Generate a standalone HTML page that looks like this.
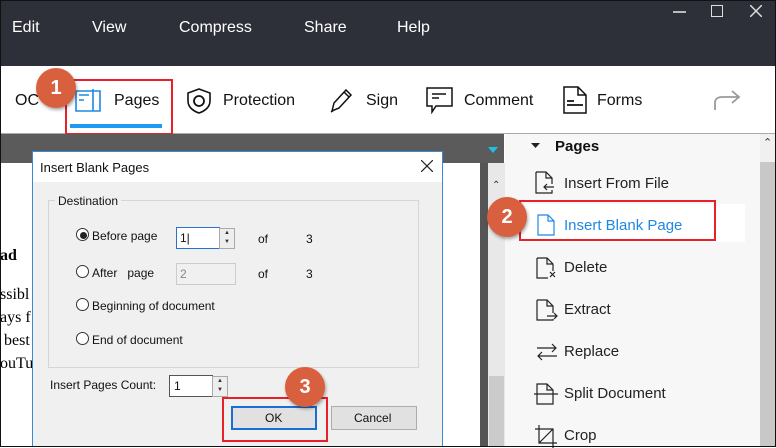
<!DOCTYPE html>
<html><head><meta charset="utf-8"><style>
*{margin:0;padding:0;box-sizing:border-box}
body{width:776px;height:447px;overflow:hidden;position:relative;background:#fff;font-family:"Liberation Sans",sans-serif}
.a{position:absolute}
.menu{color:#fff;font-size:16px;top:19px}
.tb{font-size:16px;color:#111;top:92px}
.dl{font-size:12px;color:#111}
.rd{width:13px;height:13px;border:1px solid #333;border-radius:50%;background:#fff}
.pi{font-size:15px;color:#222}
.badge{width:40px;height:40px;border-radius:50%;background:#d9603f;color:#fff;font-weight:bold;font-size:20px;text-align:center;line-height:40px;box-shadow:1px 2px 3px rgba(0,0,0,.35)}
.spin{width:16px;border:1px solid #aaa;background:#eee;font-size:6px;line-height:9px;text-align:center;color:#333}
</style></head><body>
<div class="a" style="left:0;top:0;width:776px;height:66px;background:#2e3039"></div>
<div class="a menu" style="left:12px">Edit</div>
<div class="a menu" style="left:92px">View</div>
<div class="a menu" style="left:179px">Compress</div>
<div class="a menu" style="left:304px">Share</div>
<div class="a menu" style="left:397px">Help</div>
<div class="a" style="left:673px;top:11px;width:13px;height:2px;background:#bbb"></div>
<div class="a" style="left:711px;top:5px;width:12px;height:12px;border:1.5px solid #ddd"></div>
<svg class="a" style="left:750px;top:5px" width="12" height="12"><path d="M0 0L12 12M12 0L0 12" stroke="#ddd" stroke-width="1.5"/></svg>

<div class="a" style="left:0;top:133px;width:776px;height:1px;background:#aaa"></div>
<div class="a tb" style="left:15px">OC</div>
<svg class="a" style="left:74px;top:88px" width="28" height="26"><path d="M2 3h24v20H2z M19 1v22" fill="none" stroke="#1e88e5" stroke-width="1.6"/><path d="M5 7h10M5 12h5" stroke="#1e88e5" stroke-width="1.6"/></svg>
<div class="a tb" style="left:114px">Pages</div>
<div class="a" style="left:70px;top:124px;width:92px;height:4px;background:#1e9af0"></div>
<div class="a" style="left:65px;top:79px;width:108px;height:56px;border:2px solid #e8202a"></div>
<svg class="a" style="left:185px;top:87px" width="28" height="28"><path d="M14 2L25 6v8c0 6-5 10-11 12C8 24 3 20 3 14V6z" fill="none" stroke="#111" stroke-width="1.6"/><circle cx="14" cy="14" r="5" fill="none" stroke="#111" stroke-width="1.8"/></svg>
<div class="a tb" style="left:223px">Protection</div>
<svg class="a" style="left:328px;top:86px" width="28" height="28"><path d="M4 25l2-8L18 4l5 5-12 13z M16 6l5 5 M3 26l3-2" fill="none" stroke="#111" stroke-width="1.5"/></svg>
<div class="a tb" style="left:366px">Sign</div>
<svg class="a" style="left:426px;top:87px" width="27" height="27"><path d="M1 1h25v18H10l-4 6v-6H1z" fill="none" stroke="#111" stroke-width="1.5"/><path d="M6 7h14M6 11h7" stroke="#111" stroke-width="1.5"/></svg>
<div class="a tb" style="left:464px">Comment</div>
<svg class="a" style="left:563px;top:86px" width="24" height="28"><path d="M1 1h14l8 8v18H1z M15 1v8h8" fill="none" stroke="#111" stroke-width="1.5"/><path d="M4 15h7M4 19h16" stroke="#111" stroke-width="1.8"/></svg>
<div class="a tb" style="left:597px">Forms</div>
<svg class="a" style="left:713px;top:89px" width="28" height="22"><path d="M2 21v-7c0-4 3-6 7-6h17M19 2l7 6-7 6" fill="none" stroke="#999" stroke-width="1.8"/></svg>
<div class="a badge" style="left:36px;top:68px">1</div>

<div class="a" style="left:0;top:134px;width:504px;height:29px;background:#5b5b5b"></div>
<svg class="a" style="left:488px;top:147px" width="10" height="7"><path d="M0 0h10L5 6z" fill="#1ec0e8"/></svg>
<div class="a" style="left:0;top:163px;width:480px;height:284px;background:#fff"></div>
<div class="a" style="left:480px;top:163px;width:8px;height:284px;background:#555"></div>
<div class="a" style="left:488px;top:163px;width:17px;height:284px;background:#e8e8e8"></div>
<div class="a" style="left:489px;top:376px;width:15px;height:71px;background:#cbcbcb"></div>
<div class="a" style="left:492px;top:180px;font-size:10px;color:#333">&#8963;</div>
<div class="a" style="left:0;top:247px;font-family:'Liberation Serif',serif;font-weight:bold;font-size:16px">ad</div>
<div class="a" style="left:0;top:283px;font-family:'Liberation Serif',serif;font-size:16px;line-height:23px">ssibl<br>ays f<br>&nbsp;best<br>ouTu</div>

<div class="a" style="left:505px;top:134px;width:271px;height:313px;background:#f7f7f7"></div>
<div class="a" style="left:760px;top:134px;width:16px;height:313px;background:#c8c8c8"></div>
<div class="a" style="left:760px;top:134px;width:16px;height:28px;background:#f0f0f0"></div>
<div class="a" style="left:763px;top:136px;font-size:11px;color:#333">&#8963;</div>
<svg class="a" style="left:531px;top:143px" width="9" height="6"><path d="M0 0h9L4.5 5z" fill="#222"/></svg>
<div class="a" style="left:555px;top:138px;font-size:15px;font-weight:bold;color:#111">Pages</div>
<div class="a" style="left:520px;top:204px;width:225px;height:38px;background:#fff"></div>
<div class="a" style="left:519px;top:200px;width:197px;height:41px;border:2px solid #e8202a"></div>
<svg class="a" style="left:535px;top:171px;overflow:visible" width="20" height="24">
<path d="M1 1h10l6 6v6 M17 19v3H1V1 M11 1v6h6" fill="none" stroke="#222" stroke-width="1.2"/><path d="M19 16h-10M12 13l-3 3 3 3" fill="none" stroke="#222" stroke-width="1.2"/></svg>
<div class="a pi" style="left:564px;top:175px">Insert From File</div>
<svg class="a" style="left:537px;top:214px" width="18" height="22"><path d="M1 1h10l6 6v14H1z M11 1v6h6" fill="none" stroke="#1e88e5" stroke-width="1.2"/></svg>
<div class="a pi" style="left:564px;top:217px;color:#1e88e5">Insert Blank Page</div>
<svg class="a" style="left:536px;top:257px" width="22" height="22"><path d="M1 1h10l6 6v7 M12 21H1V1 M11 1v6h6 M14 15l5 5M19 15l-5 5" fill="none" stroke="#222" stroke-width="1.2"/></svg>
<div class="a pi" style="left:564px;top:259px">Delete</div>
<svg class="a" style="left:536px;top:299px" width="22" height="22"><path d="M1 1h10l6 6v7 M17 20v1H1V1 M11 1v6h6 M11 17h10M18 14l3 3-3 3" fill="none" stroke="#222" stroke-width="1.2"/></svg>
<div class="a pi" style="left:564px;top:301px">Extract</div>
<svg class="a" style="left:536px;top:343px" width="22" height="18"><path d="M1 5h19M16 1l4 4-4 4 M21 13H2M6 9l-4 4 4 4" fill="none" stroke="#222" stroke-width="1.2"/></svg>
<div class="a pi" style="left:564px;top:343px">Replace</div>
<svg class="a" style="left:534px;top:383px" width="24" height="22"><path d="M3 1h10l6 6v14H3z M13 1v6h6 M0 11h24" fill="none" stroke="#222" stroke-width="1.2"/></svg>
<div class="a pi" style="left:564px;top:385px">Split Document</div>
<svg class="a" style="left:535px;top:425px" width="22" height="23"><path d="M4 0v18h18 M0 4h18v19 M4 18L18 4" fill="none" stroke="#222" stroke-width="1.2"/></svg>
<div class="a pi" style="left:564px;top:427px">Crop</div>
<div class="a badge" style="left:487px;top:197px">2</div>

<div class="a" style="left:32px;top:151px;width:411px;height:296px;background:#f0f0f0;border:1px solid #3b8ad9;border-bottom:none"></div>
<div class="a" style="left:33px;top:152px;width:409px;height:30px;background:#fff"></div>
<div class="a" style="left:40px;top:160px;font-size:13px;color:#111">Insert Blank Pages</div>
<svg class="a" style="left:421px;top:160px" width="12" height="12"><path d="M0 0L12 12M12 0L0 12" stroke="#222" stroke-width="1.2"/></svg>
<div class="a" style="left:48px;top:200px;width:371px;height:168px;border:1px solid #d5d5d5"></div>
<div class="a dl" style="left:55px;top:194px;background:#f0f0f0;padding:0 3px">Destination</div>
<div class="a rd" style="left:76px;top:228px"></div><div class="a" style="left:80px;top:232px;width:7px;height:7px;border-radius:50%;background:#222"></div>
<div class="a dl" style="left:92px;top:229px">Before page</div>
<div class="a" style="left:176px;top:227px;width:44px;height:22px;background:#fff;border:1px solid #2a72d0"></div>
<div class="a dl" style="left:180px;top:231px">1|</div>
<div class="a spin" style="left:219px;top:228px;height:21px">▲<br>▼</div>
<div class="a dl" style="left:258px;top:232px">of</div><div class="a dl" style="left:306px;top:232px">3</div>
<div class="a rd" style="left:76px;top:265px"></div>
<div class="a dl" style="left:92px;top:266px">After &nbsp; page</div>
<div class="a" style="left:176px;top:263px;width:60px;height:22px;background:#f0f0f0;border:1px solid #ccc"></div>
<div class="a dl" style="left:180px;top:267px;color:#888">2</div>
<div class="a dl" style="left:258px;top:267px">of</div><div class="a dl" style="left:306px;top:267px">3</div>
<div class="a rd" style="left:76px;top:298px"></div>
<div class="a dl" style="left:92px;top:299px">Beginning of document</div>
<div class="a rd" style="left:76px;top:332px"></div>
<div class="a dl" style="left:92px;top:333px">End of document</div>
<div class="a dl" style="left:50px;top:378px">Insert Pages Count:</div>
<div class="a" style="left:169px;top:375px;width:44px;height:22px;background:#fff;border:1px solid #555"></div>
<div class="a dl" style="left:174px;top:379px">1</div>
<div class="a spin" style="left:212px;top:376px;height:21px">▲<br>▼</div>
<div class="a" style="left:231px;top:406px;width:86px;height:24px;background:#e1e1e1;border:2px solid #1a6fd4"></div>
<div class="a dl" style="left:265px;top:411px">OK</div>
<div class="a" style="left:331px;top:406px;width:86px;height:24px;background:#e1e1e1;border:1px solid #adadad"></div>
<div class="a dl" style="left:354px;top:411px">Cancel</div>
<div class="a" style="left:222px;top:397px;width:106px;height:45px;border:2px solid #e8202a"></div>
<div class="a badge" style="left:285px;top:367px">3</div>
<div class="a" style="left:0;top:0;width:776px;height:447px;border:1px solid #111;pointer-events:none"></div>
</body></html>
